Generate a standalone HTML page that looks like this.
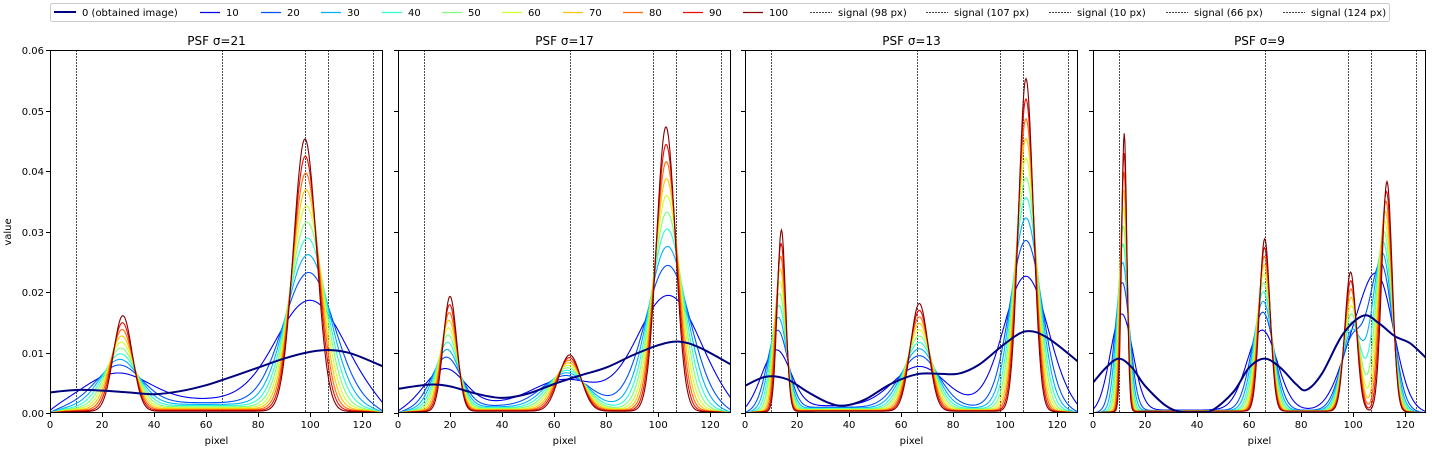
<!DOCTYPE html>
<html><head><meta charset="utf-8"><style>
html,body{margin:0;padding:0;background:#fff;}
svg text{font-family:"DejaVu Sans","Liberation Sans",sans-serif;fill:#000;}
</style></head><body>
<svg id="s" width="1432" height="452" viewBox="0 0 1432 452" xmlns="http://www.w3.org/2000/svg">
<rect x="0" y="0" width="1432" height="452" fill="#fff"/>
<g id="legend">
<rect x="50.5" y="3.5" width="1339" height="18" rx="2" fill="#fff" stroke="#ccc"/>
<line x1="54" y1="12" x2="76" y2="12" stroke="#00007f" stroke-width="2"/>
<text x="82" y="16" font-size="10">0 (obtained image)</text>
<g stroke-width="1.2">
<line x1="200" y1="12.5" x2="220" y2="12.5" stroke="#0000f1"/>
<line x1="261" y1="12.5" x2="281" y2="12.5" stroke="#0050ff"/>
<line x1="321" y1="12.5" x2="341" y2="12.5" stroke="#00b0ff"/>
<line x1="382" y1="12.5" x2="402" y2="12.5" stroke="#29ffce"/>
<line x1="442" y1="12.5" x2="462" y2="12.5" stroke="#7dff7a"/>
<line x1="502" y1="12.5" x2="522" y2="12.5" stroke="#ceff29"/>
<line x1="563" y1="12.5" x2="583" y2="12.5" stroke="#ffc400"/>
<line x1="623" y1="12.5" x2="643" y2="12.5" stroke="#ff6800"/>
<line x1="683" y1="12.5" x2="703" y2="12.5" stroke="#f10800"/>
<line x1="743" y1="12.5" x2="763" y2="12.5" stroke="#800000"/>
</g>
<text x="226" y="16" font-size="10">10</text>
<text x="287" y="16" font-size="10">20</text>
<text x="347" y="16" font-size="10">30</text>
<text x="408" y="16" font-size="10">40</text>
<text x="468" y="16" font-size="10">50</text>
<text x="528" y="16" font-size="10">60</text>
<text x="589" y="16" font-size="10">70</text>
<text x="649" y="16" font-size="10">80</text>
<text x="709" y="16" font-size="10">90</text>
<text x="769" y="16" font-size="10">100</text>
<g stroke="#000" stroke-width="0.7" stroke-dasharray="2,1">
<line x1="810" y1="12.5" x2="832" y2="12.5"/><line x1="926" y1="12.5" x2="948" y2="12.5"/><line x1="1049" y1="12.5" x2="1071" y2="12.5"/><line x1="1166" y1="12.5" x2="1188" y2="12.5"/><line x1="1283" y1="12.5" x2="1305" y2="12.5"/></g>
<text x="838" y="16" font-size="10">signal (98 px)</text>
<text x="954" y="16" font-size="10">signal (107 px)</text>
<text x="1077" y="16" font-size="10">signal (10 px)</text>
<text x="1194" y="16" font-size="10">signal (66 px)</text>
<text x="1311" y="16" font-size="10">signal (124 px)</text>
</g>
<text x="11" y="232" font-size="10" text-anchor="middle" transform="rotate(-90 11 232)">value</text>
<g id="plots"></g>
</svg>
<script>
var NS="http://www.w3.org/2000/svg";
var plots=document.getElementById('plots');
function el(t,a,p){var e=document.createElementNS(NS,t);for(var k in a)e.setAttribute(k,a[k]);(p||plots).appendChild(e);return e;}
var colors={10:"#0000f1",20:"#0050ff",30:"#00b0ff",40:"#29ffce",50:"#7dff7a",60:"#ceff29",70:"#ffc400",80:"#ff6800",90:"#f10800",100:"#800000"};
var panels=[
{L:50,t:"PSF σ=21",obs:[[0,.0034],[10,.0038],[20,.0037],[30,.0034],[40,.0031],[50,.0036],[60,.0046],[70,.006],[80,.0075],[90,.009],[100,.0101],[108,.0104],[116,.0098],[128,.0077]],
 pk:[[26,28,.0045,.0158,12,3.6],[100,98,.0165,.045,13,4.4]],b10:.0022},
{L:398,t:"PSF σ=17",obs:[[0,.004],[12,.0047],[20,.0044],[30,.0032],[40,.0025],[50,.0032],[60,.0048],[70,.0062],[80,.0075],[90,.0095],[100,.0112],[108,.0118],[116,.0108],[128,.008]],
 pk:[[18,20,.0060,.019,7.5,2.6],[64,66,.004,.0093,12,4.2],[104,103,.0180,.047,12,3.6]],b10:.0015},
{L:745,t:"PSF σ=13",obs:[[0,.0045],[8,.006],[16,.0056],[24,.0035],[32,.0017],[38,.0012],[46,.0022],[56,.0048],[66,.0064],[74,.0065],[82,.0065],[90,.008],[100,.0115],[108,.0135],[116,.0125],[128,.0085]],
 pk:[[12,14,.0095,.030,5.5,1.6],[67,67,.0065,.0178,10,3.4],[108,108,.0215,.055,8.5,2.8]],b10:.0012},
{L:1093,t:"PSF σ=9",obs:[[0,.005],[5,.0075],[10,.009],[15,.0075],[20,.0045],[28,.0012],[34,.0002],[40,.0001],[46,.0005],[54,.0035],[60,.0075],[66,.009],[72,.0075],[78,.0048],[82,.0038],[88,.0065],[96,.013],[104,.0161],[110,.0148],[116,.0127],[122,.0115],[128,.0091]],
 pk:[[11,12,.0160,.046,4.3,1.0],[65,66,.0132,.0285,5.8,2.0],[100,99,.009,.023,6,2.2],[110,113,.020,.038,6,2.0]],b10:.0005}
];
var T=50,B=413,W=333;
panels.forEach(function(p,i){
 var X=function(x){return p.L+x*W/128;},Y=function(v){return B-v/0.06*363;};
 var cid="c"+i;
 var cp=el("clipPath",{id:cid});el("rect",{x:p.L,y:T,width:W,height:B-T},cp);
 el("text",{x:p.L+W/2,y:45,"font-size":12,"text-anchor":"middle"}).textContent=p.t;
 el("text",{x:p.L+W/2,y:444,"font-size":10,"text-anchor":"middle"}).textContent="pixel";
 var g=el("g",{"clip-path":"url(#"+cid+")"});
 [10,66,98,107,124].forEach(function(s){var xx=Math.round(X(s))+.5;el("line",{x1:xx,y1:T,x2:xx,y2:B,stroke:"#000","stroke-width":0.7,"stroke-dasharray":"2,1"},g);});
 var o=p.obs,d="M"+X(o[0][0])+","+Y(o[0][1]);
 for(var j=0;j<o.length-1;j++){var p0=o[Math.max(0,j-1)],p1=o[j],p2=o[j+1],p3=o[Math.min(o.length-1,j+2)];
  var c1x=p1[0]+(p2[0]-p0[0])/6,c1y=p1[1]+(p2[1]-p0[1])/6,c2x=p2[0]-(p3[0]-p1[0])/6,c2y=p2[1]-(p3[1]-p1[1])/6;
  d+="C"+X(c1x).toFixed(1)+","+Y(c1y).toFixed(1)+" "+X(c2x).toFixed(1)+","+Y(c2y).toFixed(1)+" "+X(p2[0]).toFixed(1)+","+Y(p2[1]).toFixed(1);}
 for(var k=10;k<=100;k+=10){
  var t=Math.pow((k-10)/90,0.6),b=p.b10*(1-t)+.0003*t,pts=[];
  for(var x=0;x<=128;x+=0.25){
   var v=b*(1-Math.exp(-x/8))*(1-Math.exp(-(128-x)/8));
   p.pk.forEach(function(q){var mu=q[0]+(q[1]-q[0])*t,A=q[2]*Math.pow(q[3]/q[2],t),s=q[4]*Math.pow(q[5]/q[4],t);v+=A*Math.exp(-(x-mu)*(x-mu)/(2*s*s));});
   pts.push(X(x).toFixed(1)+","+Y(v).toFixed(1));}
  el("polyline",{points:pts.join(" "),fill:"none",stroke:colors[k],"stroke-width":1.1},g);
 }
 el("path",{d:d,fill:"none",stroke:"#00007f","stroke-width":2},g);
 el("rect",{x:p.L+.5,y:T+.5,width:W-1,height:B-T-1,fill:"none",stroke:"#000","stroke-width":1});
 for(var x=0;x<=120;x+=20){var xx=Math.round(X(x))+.5;el("line",{x1:xx,y1:B,x2:xx,y2:B+4,stroke:"#000"});el("text",{x:X(x),y:B+15,"font-size":10,"text-anchor":"middle"}).textContent=x;}
 for(var v=0;v<=6;v++){var yy=Math.round(Y(v/100))+.5;el("line",{x1:p.L-4,y1:yy,x2:p.L,y2:yy,stroke:"#000"});
  if(i==0)el("text",{x:p.L-6,y:yy+3.5,"font-size":10,"text-anchor":"end"}).textContent="0.0"+v;}
});
</script>
</body></html>
